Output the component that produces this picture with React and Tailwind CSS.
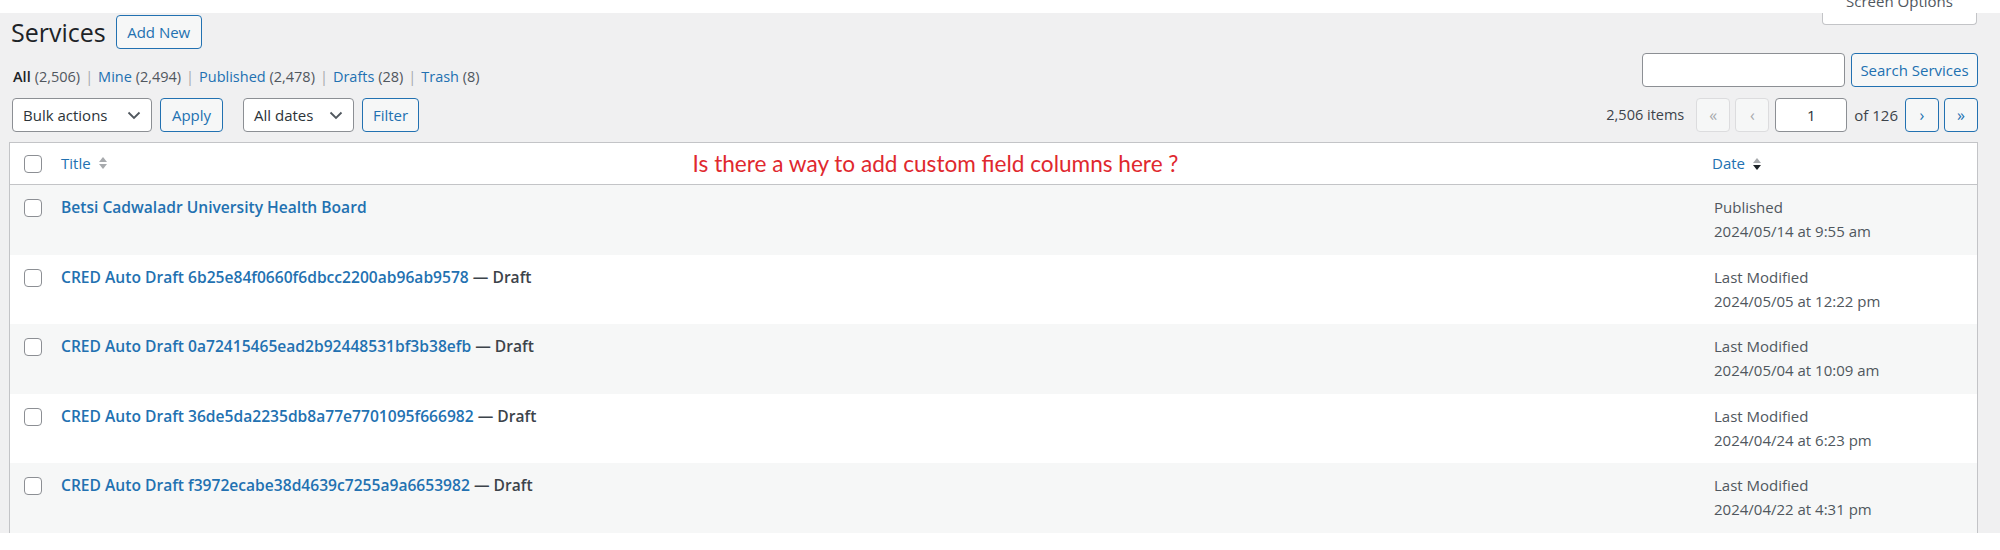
import React from "react";

const font = { fontFamily: '"Open Sans", "Noto Sans", sans-serif' };

const rows = [
  { title: "Betsi Cadwaladr University Health Board", draft: false, status: "Published", date: "2024/05/14 at 9:55 am" },
  { title: "CRED Auto Draft 6b25e84f0660f6dbcc2200ab96ab9578", draft: true, status: "Last Modified", date: "2024/05/05 at 12:22 pm" },
  { title: "CRED Auto Draft 0a72415465ead2b92448531bf3b38efb", draft: true, status: "Last Modified", date: "2024/05/04 at 10:09 am" },
  { title: "CRED Auto Draft 36de5da2235db8a77e7701095f666982", draft: true, status: "Last Modified", date: "2024/04/24 at 6:23 pm" },
  { title: "CRED Auto Draft f3972ecabe38d4639c7255a9a6653982", draft: true, status: "Last Modified", date: "2024/04/22 at 4:31 pm" },
];

const Checkbox = () => (
  <span className="block w-[18px] h-[18px] bg-white border border-[#8c8f94] rounded-[4px]" />
);

const SortIcon = ({ down = "#a7aaad" }) => (
  <svg width="10" height="16" viewBox="0 0 10 16" className="ml-[7px]">
    <path d="M1 7 L5 2 L9 7 Z" fill="#a7aaad" />
    <path d="M1 9 L5 14 L9 9 Z" fill={down} />
  </svg>
);

const Chevron = () => (
  <svg width="14" height="9" viewBox="0 0 14 9" fill="none">
    <path d="M1.5 1.5 L7 7 L12.5 1.5" stroke="#50575e" strokeWidth="1.8" />
  </svg>
);

const Select = ({ label, width }) => (
  <div className={`${width} h-[34px] flex items-center justify-between pl-[10px] pr-[10px] bg-white border border-[#8c8f94] rounded-[4px] text-[15px] text-[#2c3338]`}>
    <span>{label}</span>
    <Chevron />
  </div>
);

const SecondaryButton = ({ children, className = "" }) => (
  <div className={`h-[34px] flex items-center justify-center bg-[#f6f7f7] border border-[#2271b1] rounded-[4px] text-[15px] text-[#2271b1] ${className}`}>
    {children}
  </div>
);

const PageButton = ({ children, disabled }) => (
  <div
    className={
      disabled
        ? "w-[34px] h-[34px] flex items-center justify-center bg-[#f6f7f7] border border-[#dcdcde] rounded-[4px] text-[16px] text-[#a7aaad]"
        : "w-[34px] h-[34px] flex items-center justify-center bg-[#f6f7f7] border border-[#2271b1] rounded-[4px] text-[16px] text-[#2271b1]"
    }
  >
    {children}
  </div>
);

const Sep = () => <span className="mx-[5px] text-[#a7aaad]">|</span>;

export default function App() {
  return (
    <div className="relative w-[2000px] h-[550px] overflow-hidden flex flex-col bg-white" style={font}>
      {/* Screen options tab, cut by the top edge */}
      <div className="absolute left-[1822px] top-[13px] w-[155px] h-[12px] bg-white border-x border-b border-[#c3c4c7] rounded-b-[4px]" />
      <div className="absolute left-[1822px] top-[-9px] w-[155px] h-[20px] leading-[20px] text-center text-[15px] text-[#50575e]">
        Screen Options
      </div>

      <div className="h-[13px] bg-white" />

      <div className="bg-[#f0f0f1] pl-[9px] pr-[22px] pt-[2px]">
        {/* Heading */}
        <div className="flex items-center h-[34px]">
          <h1 className="ml-[2px] text-[25px] leading-[34px] text-[#1d2327]">Services</h1>
          <SecondaryButton className="ml-[10px] w-[86px]">Add New</SecondaryButton>
        </div>

        {/* Views + search */}
        <div className="flex justify-between items-start mt-[4px]">
          <div className="ml-[4px] mt-[15px] leading-[18px] text-[14.5px] text-[#50575e] flex items-center">
            <span className="font-semibold text-[#1d2327]">All</span>
            <span className="ml-[4px]">(2,506)</span>
            <Sep />
            <span className="text-[#2271b1]">Mine <span className="text-[#50575e]">(2,494)</span></span>
            <Sep />
            <span className="text-[#2271b1]">Published <span className="text-[#50575e]">(2,478)</span></span>
            <Sep />
            <span className="text-[#2271b1]">Drafts <span className="text-[#50575e]">(28)</span></span>
            <Sep />
            <span className="text-[#2271b1]">Trash <span className="text-[#50575e]">(8)</span></span>
          </div>
          <div className="flex items-center gap-[6px]">
            <div className="w-[203px] h-[34px] bg-white border border-[#8c8f94] rounded-[4px]" />
            <SecondaryButton className="w-[127px]">Search Services</SecondaryButton>
          </div>
        </div>

        {/* Tablenav */}
        <div className="flex justify-between items-center mt-[11px] h-[34px]">
          <div className="flex items-center ml-[3px]">
            <Select label="Bulk actions" width="w-[140px]" />
            <SecondaryButton className="ml-[8px] w-[63px]">Apply</SecondaryButton>
            <Select label="All dates" width="ml-[20px] w-[111px]" />
            <SecondaryButton className="ml-[8px] w-[57px]">Filter</SecondaryButton>
          </div>
          <div className="flex items-center text-[15px] text-[#3c434a]">
            <span className="mr-[12px] text-[14.5px]">2,506 items</span>
            <div className="flex items-center gap-[5px]">
              <PageButton disabled>«</PageButton>
              <PageButton disabled>‹</PageButton>
              <div className="ml-[1px] w-[72px] h-[34px] flex items-center justify-center bg-white border border-[#8c8f94] rounded-[4px] text-[#2c3338]">
                1
              </div>
              <span className="mx-[2px]">of 126</span>
              <PageButton>›</PageButton>
              <PageButton>»</PageButton>
            </div>
          </div>
        </div>

        {/* Table */}
        <div className="mt-[10px] border-x border-t border-[#c3c4c7] bg-white">
          <div className="flex items-center h-[42px] border-b border-[#c3c4c7]">
            <div className="w-[51px] pl-[14px]">
              <Checkbox />
            </div>
            <div className="flex-1 flex items-center text-[15px] text-[#2271b1]">
              <span>Title</span>
              <SortIcon />
              <span
                className="ml-[585px] text-[22.6px] text-[#e0282e]"
                style={{ fontFamily: 'Lato, "Noto Sans", sans-serif' }}
              >
                Is there a way to add custom field columns here ?
              </span>
            </div>
            <div className="w-[265px] flex items-center text-[15px] text-[#2271b1]">
              <span>Date</span>
              <SortIcon down="#1d2327" />
            </div>
          </div>

          {rows.map((r, i) => (
            <div key={i} className={`flex h-[69.5px] ${i % 2 === 0 ? "bg-[#f6f7f7]" : "bg-white"}`}>
              <div className="w-[51px] pl-[14px] pt-[14px]">
                <Checkbox />
              </div>
              <div className="flex-1 pt-[10px] leading-[24px] text-[15.6px] font-semibold">
                <span className="text-[#2271b1]">{r.title}</span>
                {r.draft && <span className="text-[#3c434a]"> — Draft</span>}
              </div>
              <div className="w-[265px] pt-[10px] pl-[2px] leading-[24px] text-[15px] text-[#50575e]">
                <div>{r.status}</div>
                <div>{r.date}</div>
              </div>
            </div>
          ))}
        </div>
      </div>

      <div className="flex-1 bg-white" />
    </div>
  );
}
